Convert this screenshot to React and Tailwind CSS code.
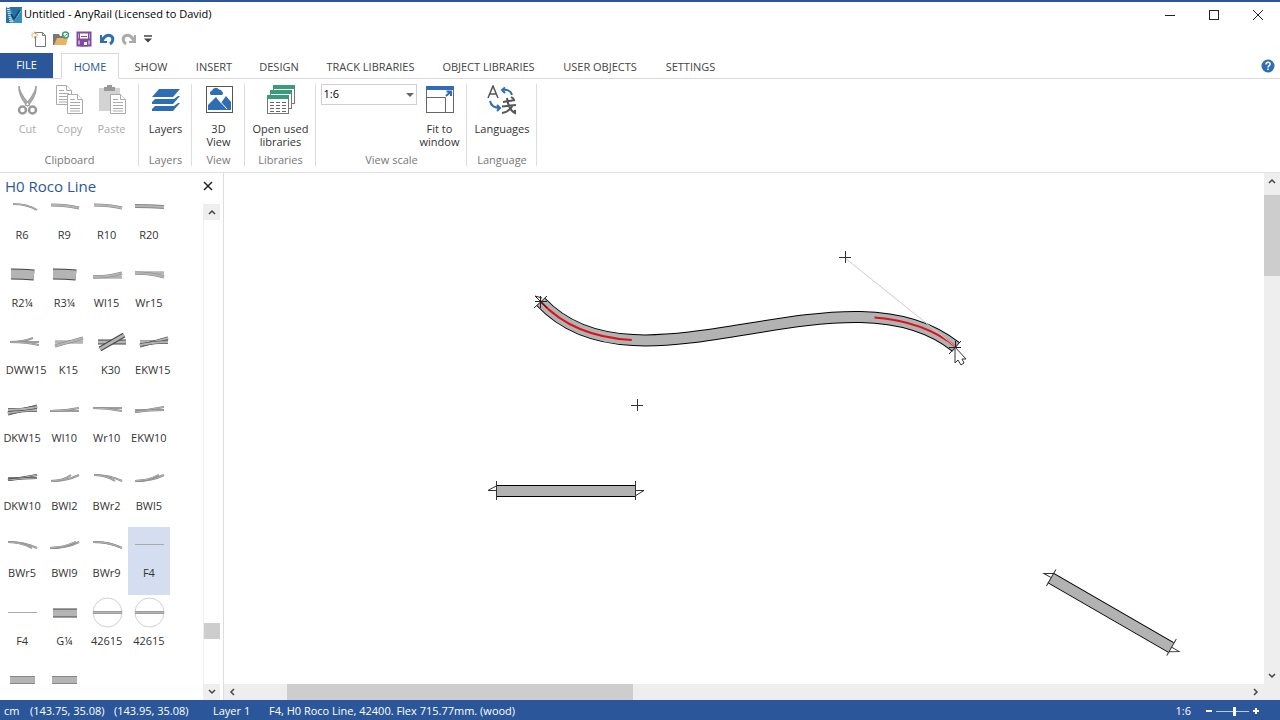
import { useState } from 'react';

const tabs = [
  { name: 'HOME', width: 'w-[58px]' },
  { name: 'SHOW', width: 'w-[64px]' },
  { name: 'INSERT', width: 'w-[62px]' },
  { name: 'DESIGN', width: 'w-[68px]' },
  { name: 'TRACK LIBRARIES', width: 'w-[115px]' },
  { name: 'OBJECT LIBRARIES', width: 'w-[121px]' },
  { name: 'USER OBJECTS', width: 'w-[102px]' },
  { name: 'SETTINGS', width: 'w-[79px]' },
];

// w is the width of the ballast in the thumbnail, each d is one track centre line
const parts = [
  { name: 'R6', w: 2, d: ['M12 15 Q26 15 36 21'] },
  { name: 'R9', w: 3, d: ['M8 16 Q24 16 36 19'] },
  { name: 'R10', w: 3, d: ['M8 16 Q24 16 36 19'] },
  { name: 'R20', w: 4, d: ['M7 17 Q22 17 36 18'] },
  { name: 'R2¼', w: 11, d: ['M10 17 Q22 17 33 18'] },
  { name: 'R3¼', w: 11, d: ['M10 17 Q22 17 33 18'] },
  { name: 'Wl15', w: 3, d: ['M7 20 H36', 'M7 20 Q22 20 36 16'] },
  { name: 'Wr15', w: 3, d: ['M7 16 H36', 'M7 16 Q22 16 36 20'] },
  { name: 'DWW15', w: 2, d: ['M9 18 H38', 'M9 18 Q22 18 32 14', 'M9 18 Q26 18 38 21'], wide: true },
  { name: 'K15', w: 3, d: ['M12 18 H40', 'M12 22 L40 14'], wide: true },
  { name: 'K30', w: 5, d: ['M12 18 H40', 'M14 25 L38 11'], wide: true, dark: true },
  { name: 'EKW15', w: 3, d: ['M12 18 H40', 'M12 22 L40 14', 'M12 21 Q27 18 40 18'], wide: true, dark: true },
  { name: 'DKW15', w: 3, d: ['M7 18 H36', 'M7 22 L36 14', 'M7 21 Q22 18 36 18', 'M7 18 Q22 18 36 15'], dark: true },
  { name: 'Wl10', w: 2, d: ['M7 19 H36', 'M7 19 Q22 19 36 16'] },
  { name: 'Wr10', w: 2, d: ['M7 16 H36', 'M7 16 Q22 16 36 19'] },
  { name: 'EKW10', w: 2, d: ['M7 18 H36', 'M7 20 L36 15', 'M7 20 Q22 18 36 18'] },
  { name: 'DKW10', w: 2, d: ['M7 18 H36', 'M7 20 L36 15', 'M7 20 Q22 18 36 18'], dark: true },
  { name: 'BWl2', w: 2, d: ['M8 21 Q24 21 36 15', 'M8 21 Q20 21 28 15'] },
  { name: 'BWr2', w: 2, d: ['M8 15 Q24 15 36 21', 'M8 15 Q20 15 29 21'] },
  { name: 'BWl5', w: 2, d: ['M7 21 Q24 21 36 15', 'M7 21 Q20 21 31 15'] },
  { name: 'BWr5', w: 2, d: ['M7 15 Q24 15 36 21', 'M7 15 Q20 15 31 21'] },
  { name: 'BWl9', w: 2, d: ['M7 21 Q24 21 36 15', 'M7 21 Q20 21 33 15'] },
  { name: 'BWr9', w: 2, d: ['M7 15 Q24 15 36 21', 'M7 15 Q24 15 33 20'] },
  { name: 'F4', w: 1, d: ['M7 17.5 H36'], selected: true },
  { name: 'F4', w: 1, d: ['M7 17.5 H36'] },
  { name: 'G¼', w: 9, d: ['M10 18 H34'] },
  { name: '42615', w: 3, d: ['M7 17.5 H36'], circle: true },
  { name: '42615', w: 3, d: ['M7 17.5 H36'], circle: true },
  { name: '', w: 8, d: ['M9 18 H34'] },
  { name: '', w: 8, d: ['M9 18 H34'] },
];

function Thumb({ part }) {
  return (
    <svg viewBox="0 0 42 34" className="h-[34px] w-[42px] shrink-0" fill="none">
      {part.circle && <circle cx="21.5" cy="17.5" r="14.5" stroke="#d0d0d0" />}
      {part.d.map((d) => (
        <g key={d}>
          <path d={d} stroke={part.w > 8 || part.dark ? '#444' : '#888'} strokeWidth={part.w} />
          {part.w > 1 && <path d={d} stroke="#b4b4b4" strokeWidth={part.w > 3 ? part.w - 2 : part.w - 1} />}
        </g>
      ))}
      {part.name === 'F4' && <path d="M7 17.5 H36" stroke="#aaa" />}
    </svg>
  );
}

function Logo() {
  return (
    <svg viewBox="0 0 16 16" className="h-4 w-4">
      <rect width="16" height="16" fill="#2673a3" />
      <path d="M4 0 L8 10 L16 0 V16 H4 Z" fill="#3a8fbd" />
      <path d="M2 0 L5 15" fill="none" stroke="#e8f4fa" strokeWidth="3" strokeDasharray="1 1" />
      <path d="M6 15 L15 3" fill="none" stroke="#a9d3e8" strokeWidth="2" strokeDasharray="2 1" />
      <path d="M5 7 L8 12 L14 3" fill="none" stroke="#164b70" strokeWidth="2" />
    </svg>
  );
}

function Pages({ x, y }) {
  return (
    <g transform={`translate(${x} ${y})`} fill="#fff" stroke="#aaa">
      <path d="M.5 .5 H10.5 L15.5 5.5 V19.5 H.5 Z" />
      <path d="M10.5 .5 V5.5 H15.5 M3 5.5 H8 M3 8.5 H13 M3 11.5 H13 M3 14.5 H13 M3 17 H13" />
    </g>
  );
}

const icons = {
  cut: (
    <g fill="none" stroke="#999">
      <path d="M6 1 C7 7 11 13 17 20 L14 21 C9 15 5 8 6 1 Z M23 1 C22 7 18 13 12 20 L15 21 C20 15 24 8 23 1 Z" fill="#aaa" />
      <ellipse cx="9.500" cy="25" rx="3.500" ry="3.500" strokeWidth="2.500" />
      <ellipse cx="19.500" cy="25" rx="3.500" ry="3.500" strokeWidth="2.500" />
    </g>
  ),
  copy: (
    <g>
      <Pages x={1} y={0} />
      <Pages x={12} y={9} />
    </g>
  ),
  paste: (
    <g>
      <path d="M2 3 H23 V26 H2 Z" fill="#d3d3d3" />
      <path d="M7 2 H10 V0 H15 V2 H18 V6 H7 Z" fill="#999" />
      <Pages x={13} y={9} />
    </g>
  ),
  layers: (
    <g fill="#2f6eb2">
      <path d="M8 4 H29 L22 12 H1 Z" />
      <path d="M1 17 L4 14 H23 L27 11 H29 L22 19 H1 Z" />
      <path d="M1 24 L4 21 H23 L27 18 H29 L22 26 H1 Z" />
    </g>
  ),
  view3d: (
    <g>
      <rect x="2.500" y="1.500" width="26" height="26" fill="#fff" stroke="#555" />
      <path d="M7 10 a2.500 2.500 0 0 1 1 -4.500 a4 4 0 0 1 7 -1 a3 3 0 0 1 3 2 a2 2 0 0 1 0 3.500 Z" fill="#2f6eb2" />
      <path d="M4 25 V20 L12 12 L17 18 L22 11 L27 17 V25 Z" fill="#2f6eb2" />
      <path d="M13 13 L23 24" stroke="#fff" />
    </g>
  ),
  libraries: (
    <g>
      {[[7, 0], [4, 5], [1, 10]].map(([x, y]) => (
        <g key={x}>
          <rect x={x + 0.5} y={y + 0.5} width="21" height="18" fill="#fff" stroke="#777" />
          <rect x={x} y={y} width="22" height="4" fill="#3a9b79" />
        </g>
      ))}
      <path d="M4 17.500 H20 M4 20.500 H20 M4 23.500 H20 M4 26.500 H20" stroke="#666" strokeDasharray="4 2" />
    </g>
  ),
  fit: (
    <g fill="none">
      <rect x="1.500" y="1.500" width="27" height="26" fill="#fff" stroke="#666" />
      <rect x="1" y="1" width="28" height="4" fill="#2f6eb2" />
      <path d="M1.500 12.500 H20.500 V27.500" stroke="#666" />
      <path d="M21 11 L26 6.500 M21.500 6.500 H26 V11" stroke="#2f6eb2" strokeWidth="2" />
    </g>
  ),
  languages: (
    <g fill="none" stroke="#555" strokeWidth="2">
      <path d="M1 13 L6 1 L11 13 M3 9 H9" strokeWidth="1.500" />
      <path d="M16 17 L28 15 M15 21.500 L29 20 M20 13 C21 20 23 26 28 28 V25 M26 20 C24 24 21 27 15 28 M24 12 L27 14" />
      <path d="M18 2.500 L15 5 L18 8 M15 5 C20 4 24 6 25 10" stroke="#2f6eb2" />
      <path d="M10 20 L13 23 L10 26 M13 23 C8 23 4 21 3 16" stroke="#2f6eb2" />
    </g>
  ),
};

function RibbonButton({ icon, lines, width, disabled }) {
  return (
    <button type="button" disabled={disabled} className={`${width} flex h-[68px] flex-col items-center pt-px disabled:text-[#aaa]`}>
      <svg viewBox="0 0 30 30" className="h-[30px] w-[30px] shrink-0">{icons[icon]}</svg>
      <span className="mt-[7px] flex flex-col leading-[13px]">
        {lines.map((line) => (
          <span key={line} className="whitespace-nowrap">{line}</span>
        ))}
      </span>
    </button>
  );
}

function Group({ label, width, children }) {
  return (
    <div role="group" aria-label={label} className={`${width} flex shrink-0 flex-col items-center border-r border-[#dcdcdc] pl-px`}>
      <div className="flex h-[68px] w-full justify-center">{children}</div>
      <div className="leading-4 text-[#777]">{label}</div>
    </div>
  );
}

const arrows = {
  up: 'M3 8 L6 5 L9 8',
  down: 'M3 4 L6 7 L9 4',
  left: 'M8 3 L5 6 L8 9',
  right: 'M4 3 L7 6 L4 9',
};

function ScrollArrow({ dir }) {
  return (
    <button type="button" aria-label={`Scroll ${dir}`} className="flex h-4 w-4 shrink-0 items-center justify-center bg-[#eee]">
      <svg viewBox="0 0 12 12" className="h-3 w-3"><path d={arrows[dir]} fill="none" stroke="#444" strokeWidth="1.500" /></svg>
    </button>
  );
}

const flex = 'M541 301 C637 404 845 257 956 346';
const flexReversed = 'M956 346 C845 257 637 404 541 301';

function Cross({ x, y }) {
  return <path d={`M${x - 6} ${y}.5 h12 M${x}.5 ${y - 6} v12`} stroke="#333" />;
}

function StraightTrack() {
  return (
    <g>
      <rect x="0" y="-5" width="139" height="11" fill="#b2b2b2" />
      <path d="M0 -4.500 H139 M0 6.500 H139" stroke="#000" />
      <path d="M.5 -9 V10 M139.500 -9 V10 M0 -4 L-8 .5 H0 M139 .5 H148 L139 6" fill="none" stroke="#333" />
    </g>
  );
}

function Plan() {
  return (
    <svg className="h-full w-full" fill="none" role="img" aria-label="Track plan">
      <g transform="translate(-224 -173)">
        <g transform="translate(0 1)">
          <path d={flex} stroke="#000" strokeWidth="12" />
          <path d={flex} stroke="#b2b2b2" strokeWidth="10" />
          <path d={flex} stroke="#e01018" strokeWidth="2" strokeDasharray="101 1000" />
          <path d={flexReversed} stroke="#e01018" strokeWidth="2" strokeDasharray="88 1000" />
          <path d="M845 257 L956 346" stroke="#ccc" />
          <Cross x={845} y={256} />
          <Cross x={637} y={404} />
          <path d="M534 307 L547 295 M535 295 L547 307 M535 300.500 H547 M540.500 295 V307 M535 295 L542 297" stroke="#222" />
          <path d="M949 353 L961 340 M949 346.500 H961 M955.500 340 V354" stroke="#222" />
          <path d="M955 346 V362 L958 359 L961 364 L964 362 L962 358 H966 Z" fill="#fff" stroke="#333" />
        </g>
        <g transform="translate(496 490)"><StraightTrack /></g>
        <g transform="translate(1051 577) rotate(30)"><StraightTrack /></g>
      </g>
    </svg>
  );
}

export default function App() {
  const [active, setActive] = useState('HOME');
  const [zoom, setZoom] = useState(55);

  return (
    <div className="flex h-screen flex-col overflow-hidden border-t-2 border-[#2b579a] bg-white font-['Open_Sans','Noto_Sans',sans-serif] text-[11px] text-[#333]">
      <header className="shrink-0">
        <div className="flex h-[25px] items-center pl-[6px]">
          <Logo />
          <h1 className="ml-[2px] text-black">Untitled - AnyRail (Licensed to David)</h1>
          <div className="ml-auto flex">
            <button type="button" aria-label="Minimize" className="flex w-11 justify-center">
              <svg viewBox="0 0 12 12" className="h-3 w-3"><path d="M1 6.500 H11" stroke="#222" /></svg>
            </button>
            <button type="button" aria-label="Maximize" className="flex w-11 justify-center">
              <svg viewBox="0 0 12 12" className="h-3 w-3"><rect x="1.500" y="1.500" width="9" height="9" fill="none" stroke="#222" /></svg>
            </button>
            <button type="button" aria-label="Close" className="flex w-11 justify-center">
              <svg viewBox="0 0 12 12" className="h-3 w-3"><path d="M1 1 L11 11 M11 1 L1 11" stroke="#222" /></svg>
            </button>
          </div>
        </div>

        <div className="flex h-[26px] items-center gap-[6px] pb-[2px] pl-[31px]">
          <button type="button" aria-label="New">
            <svg viewBox="0 0 16 16" className="h-4 w-4">
              <path d="M4.500 1.500 H11.500 L14.500 4.500 V15.500 H4.500 Z" fill="#fff" stroke="#777" />
              <path d="M11.500 1.500 V4.500 H14.500" fill="none" stroke="#777" />
              <path d="M0 4 H7 M3.500 .5 V7.500 M1 1.500 L6 6.500 M6 1.500 L1 6.500" stroke="#e5ad55" />
              <circle cx="3.500" cy="4" r="1.500" fill="#fff" />
            </svg>
          </button>
          <button type="button" aria-label="Open">
            <svg viewBox="0 0 16 16" className="h-4 w-4">
              <path d="M0 14 V3 H6 L7 5 H11 V14 Z" fill="#777" />
              <path d="M1 14 L4 7 H15 L13 14 Z" fill="#e9b45f" />
              <circle cx="12.500" cy="4" r="3" fill="#fff" stroke="#3a9b79" strokeWidth="1.500" />
              <path d="M10 4 L12 5.500 L14 3" fill="none" stroke="#3a9b79" />
            </svg>
          </button>
          <button type="button" aria-label="Save" className="ml-px">
            <svg viewBox="0 0 16 16" className="h-4 w-4" fill="none" stroke="#804a9f">
              <path d="M1.500 1.500 H14.500 V14.500 H1.500 Z" fill="#fff" strokeWidth="2" />
              <path d="M1 8.500 H15" strokeWidth="2" />
              <path d="M3.500 2 V8 M12.500 2 V8 M5 5.500 H11" />
              <path d="M4 9 H12 V15 H4 Z" fill="#804a9f" />
              <path d="M8 11 H11 V14 H8 Z" fill="#fff" stroke="none" />
            </svg>
          </button>
          <button type="button" aria-label="Undo" className="ml-px">
            <svg viewBox="0 0 16 16" className="h-4 w-4" fill="none" stroke="#2f6eb2" strokeWidth="2">
              <path d="M2 4 V11 H8" />
              <path d="M3 10 C5 5 9 3 12 5 C15 7 14 11 11 13" strokeWidth="3" />
            </svg>
          </button>
          <button type="button" aria-label="Redo">
            <svg viewBox="0 0 16 16" className="h-4 w-4" fill="none" stroke="#aaa" strokeWidth="2">
              <path d="M14 4 V11 H8" />
              <path d="M13 10 C11 5 7 3 4 5 C1 7 2 11 5 13" strokeWidth="3" />
            </svg>
          </button>
          <button type="button" aria-label="Customize toolbar">
            <svg viewBox="0 0 10 8" className="h-2 w-[10px]"><path d="M1 1 H9" stroke="#444" strokeWidth="1.500" /><path d="M1 3.500 H9 L5 7.500 Z" fill="#444" /></svg>
          </button>
        </div>

        <nav className="flex h-[26px] border-b border-[#d9d9d9]">
          <button type="button" className="mr-2 h-[25px] w-[53px] bg-[#2b579a] text-white">FILE</button>
          {tabs.map((tab) => (
            <button
              key={tab.name}
              type="button"
              onClick={() => setActive(tab.name)}
              className={`${tab.width} h-[26px] border pt-[2px] whitespace-nowrap ${
                active === tab.name ? 'border-[#d9d9d9] border-b-white bg-white text-[#2b579a]' : 'border-transparent text-[#444]'
              }`}
            >
              {tab.name}
            </button>
          ))}
          <button type="button" aria-label="Help" className="mr-[5px] ml-auto">
            <svg viewBox="0 0 14 14" className="h-[14px] w-[14px]">
              <circle cx="7" cy="7" r="6.500" fill="#2f6eb2" />
              <path d="M5 5.500 C5 2.500 9.500 2.500 9 5.500 C8.800 6.500 7 7 7 8.500 M7 9.500 V11" fill="none" stroke="#fff" strokeWidth="1.500" />
            </svg>
          </button>
        </nav>

        <div className="flex h-[94px] border-b border-[#e2e2e2] pt-[5px] pb-[6px]">
          <Group label="Clipboard" width="w-[139px]">
            <RibbonButton icon="cut" lines={['Cut']} width="w-[42px]" disabled />
            <RibbonButton icon="copy" lines={['Copy']} width="w-[42px]" disabled />
            <RibbonButton icon="paste" lines={['Paste']} width="w-[42px]" disabled />
          </Group>
          <Group label="Layers" width="w-[53px]">
            <RibbonButton icon="layers" lines={['Layers']} width="w-full" />
          </Group>
          <Group label="View" width="w-[53px]">
            <RibbonButton icon="view3d" lines={['3D', 'View']} width="w-full" />
          </Group>
          <Group label="Libraries" width="w-[71px]">
            <RibbonButton icon="libraries" lines={['Open used', 'libraries']} width="w-full" />
          </Group>
          <Group label="View scale" width="w-[151px]">
            <div className="relative h-[21px] w-[96px]">
              <select aria-label="View scale" defaultValue="1:6" className="h-full w-full appearance-none border border-[#d0d0d0] bg-white pl-[2px] text-black">
                <option>1:6</option>
                <option>1:10</option>
                <option>1:20</option>
              </select>
              <svg viewBox="0 0 8 4" className="pointer-events-none absolute top-[9px] right-[3px] h-1 w-2"><path d="M0 0 H8 L4 4 Z" fill="#666" /></svg>
            </div>
            <RibbonButton icon="fit" lines={['Fit to', 'window']} width="w-[46px]" />
          </Group>
          <Group label="Language" width="w-[70px]">
            <RibbonButton icon="languages" lines={['Languages']} width="w-full" />
          </Group>
        </div>
      </header>

      <main className="flex min-h-0 flex-1">
        <aside className="flex w-[224px] shrink-0 flex-col border-r border-[#dcdcdc]">
          <div className="flex h-[30px] shrink-0 items-center justify-between pr-[10px] pb-1 pl-[5px]">
            <h2 className="text-[15px] text-[#2b579a]">H0 Roco Line</h2>
            <button type="button" aria-label="Close panel">
              <svg viewBox="0 0 10 10" className="h-[10px] w-[10px]"><path d="M1 1 L9 9 M9 1 L1 9" stroke="#222" strokeWidth="1.500" /></svg>
            </button>
          </div>
          <div className="flex min-h-0 flex-1">
            <div className="min-w-0 flex-1 overflow-hidden">
              <ul className="-mt-[14px] ml-px grid h-[541px] w-[169px] grid-cols-4 grid-rows-8">
                {parts.map((part, i) => (
                  <li key={i} className={`flex flex-col items-center ${part.selected ? 'bg-[#d5def0]' : ''}`}>
                    <Thumb part={part} />
                    <span className={`mt-1 leading-4 whitespace-nowrap ${part.wide ? 'pl-2' : ''}`}>{part.name}</span>
                  </li>
                ))}
              </ul>
            </div>
            <div className="mr-[3px] flex w-[17px] flex-col border-l border-[#eee] pt-px">
              <ScrollArrow dir="up" />
              <div className="flex flex-1 flex-col justify-end pb-[45px]">
                <div className="h-4 bg-[#cdcdcd]" />
              </div>
              <ScrollArrow dir="down" />
            </div>
          </div>
        </aside>

        <section className="flex min-w-0 flex-1">
          <div className="flex min-w-0 flex-1 flex-col">
            <div className="min-h-0 flex-1 overflow-hidden">
              <Plan />
            </div>
            <div className="flex h-4 shrink-0 bg-[#eee]">
              <ScrollArrow dir="left" />
              <div className="flex-1 pl-[47px]">
                <div className="h-full w-[36%] bg-[#cdcdcd]" />
              </div>
              <ScrollArrow dir="right" />
            </div>
          </div>
          <div className="flex w-4 flex-col bg-[#eee] pb-4">
            <ScrollArrow dir="up" />
            <div className="flex-1 pt-[6px]">
              <div className="h-[81px] bg-[#cdcdcd]" />
            </div>
            <ScrollArrow dir="down" />
          </div>
        </section>
      </main>

      <footer className="flex h-5 shrink-0 items-center bg-[#2b579a] pt-[2px] whitespace-nowrap text-white">
        <span className="w-[30px] pl-1">cm</span>
        <span className="w-[84px]">(143.75, 35.08)</span>
        <span className="w-[99px]">(143.95, 35.08)</span>
        <span className="w-[56px]">Layer 1</span>
        <span>F4, H0 Roco Line, 42400. Flex 715.77mm. (wood)</span>
        <span className="mr-[14px] ml-auto">1:6</span>
        <div className="mr-5 flex items-center gap-[3px]">
          <button type="button" aria-label="Zoom out" onClick={() => setZoom(zoom - 5)}>
            <svg viewBox="0 0 8 8" className="h-2 w-2"><path d="M1 4 H7" stroke="#fff" strokeWidth="2" /></svg>
          </button>
          <input
            type="range"
            aria-label="Zoom"
            value={zoom}
            onChange={(e) => setZoom(Number(e.target.value))}
            className="h-[10px] w-[33px] appearance-none bg-transparent [&::-webkit-slider-runnable-track]:h-px [&::-webkit-slider-runnable-track]:bg-[#b9cbe8] [&::-webkit-slider-thumb]:-mt-1 [&::-webkit-slider-thumb]:h-[9px] [&::-webkit-slider-thumb]:w-[3px] [&::-webkit-slider-thumb]:appearance-none [&::-webkit-slider-thumb]:bg-white"
          />
          <button type="button" aria-label="Zoom in" onClick={() => setZoom(zoom + 5)}>
            <svg viewBox="0 0 8 8" className="h-2 w-2"><path d="M1 4 H7 M4 1 V7" stroke="#fff" strokeWidth="2" /></svg>
          </button>
        </div>
      </footer>
    </div>
  );
}
